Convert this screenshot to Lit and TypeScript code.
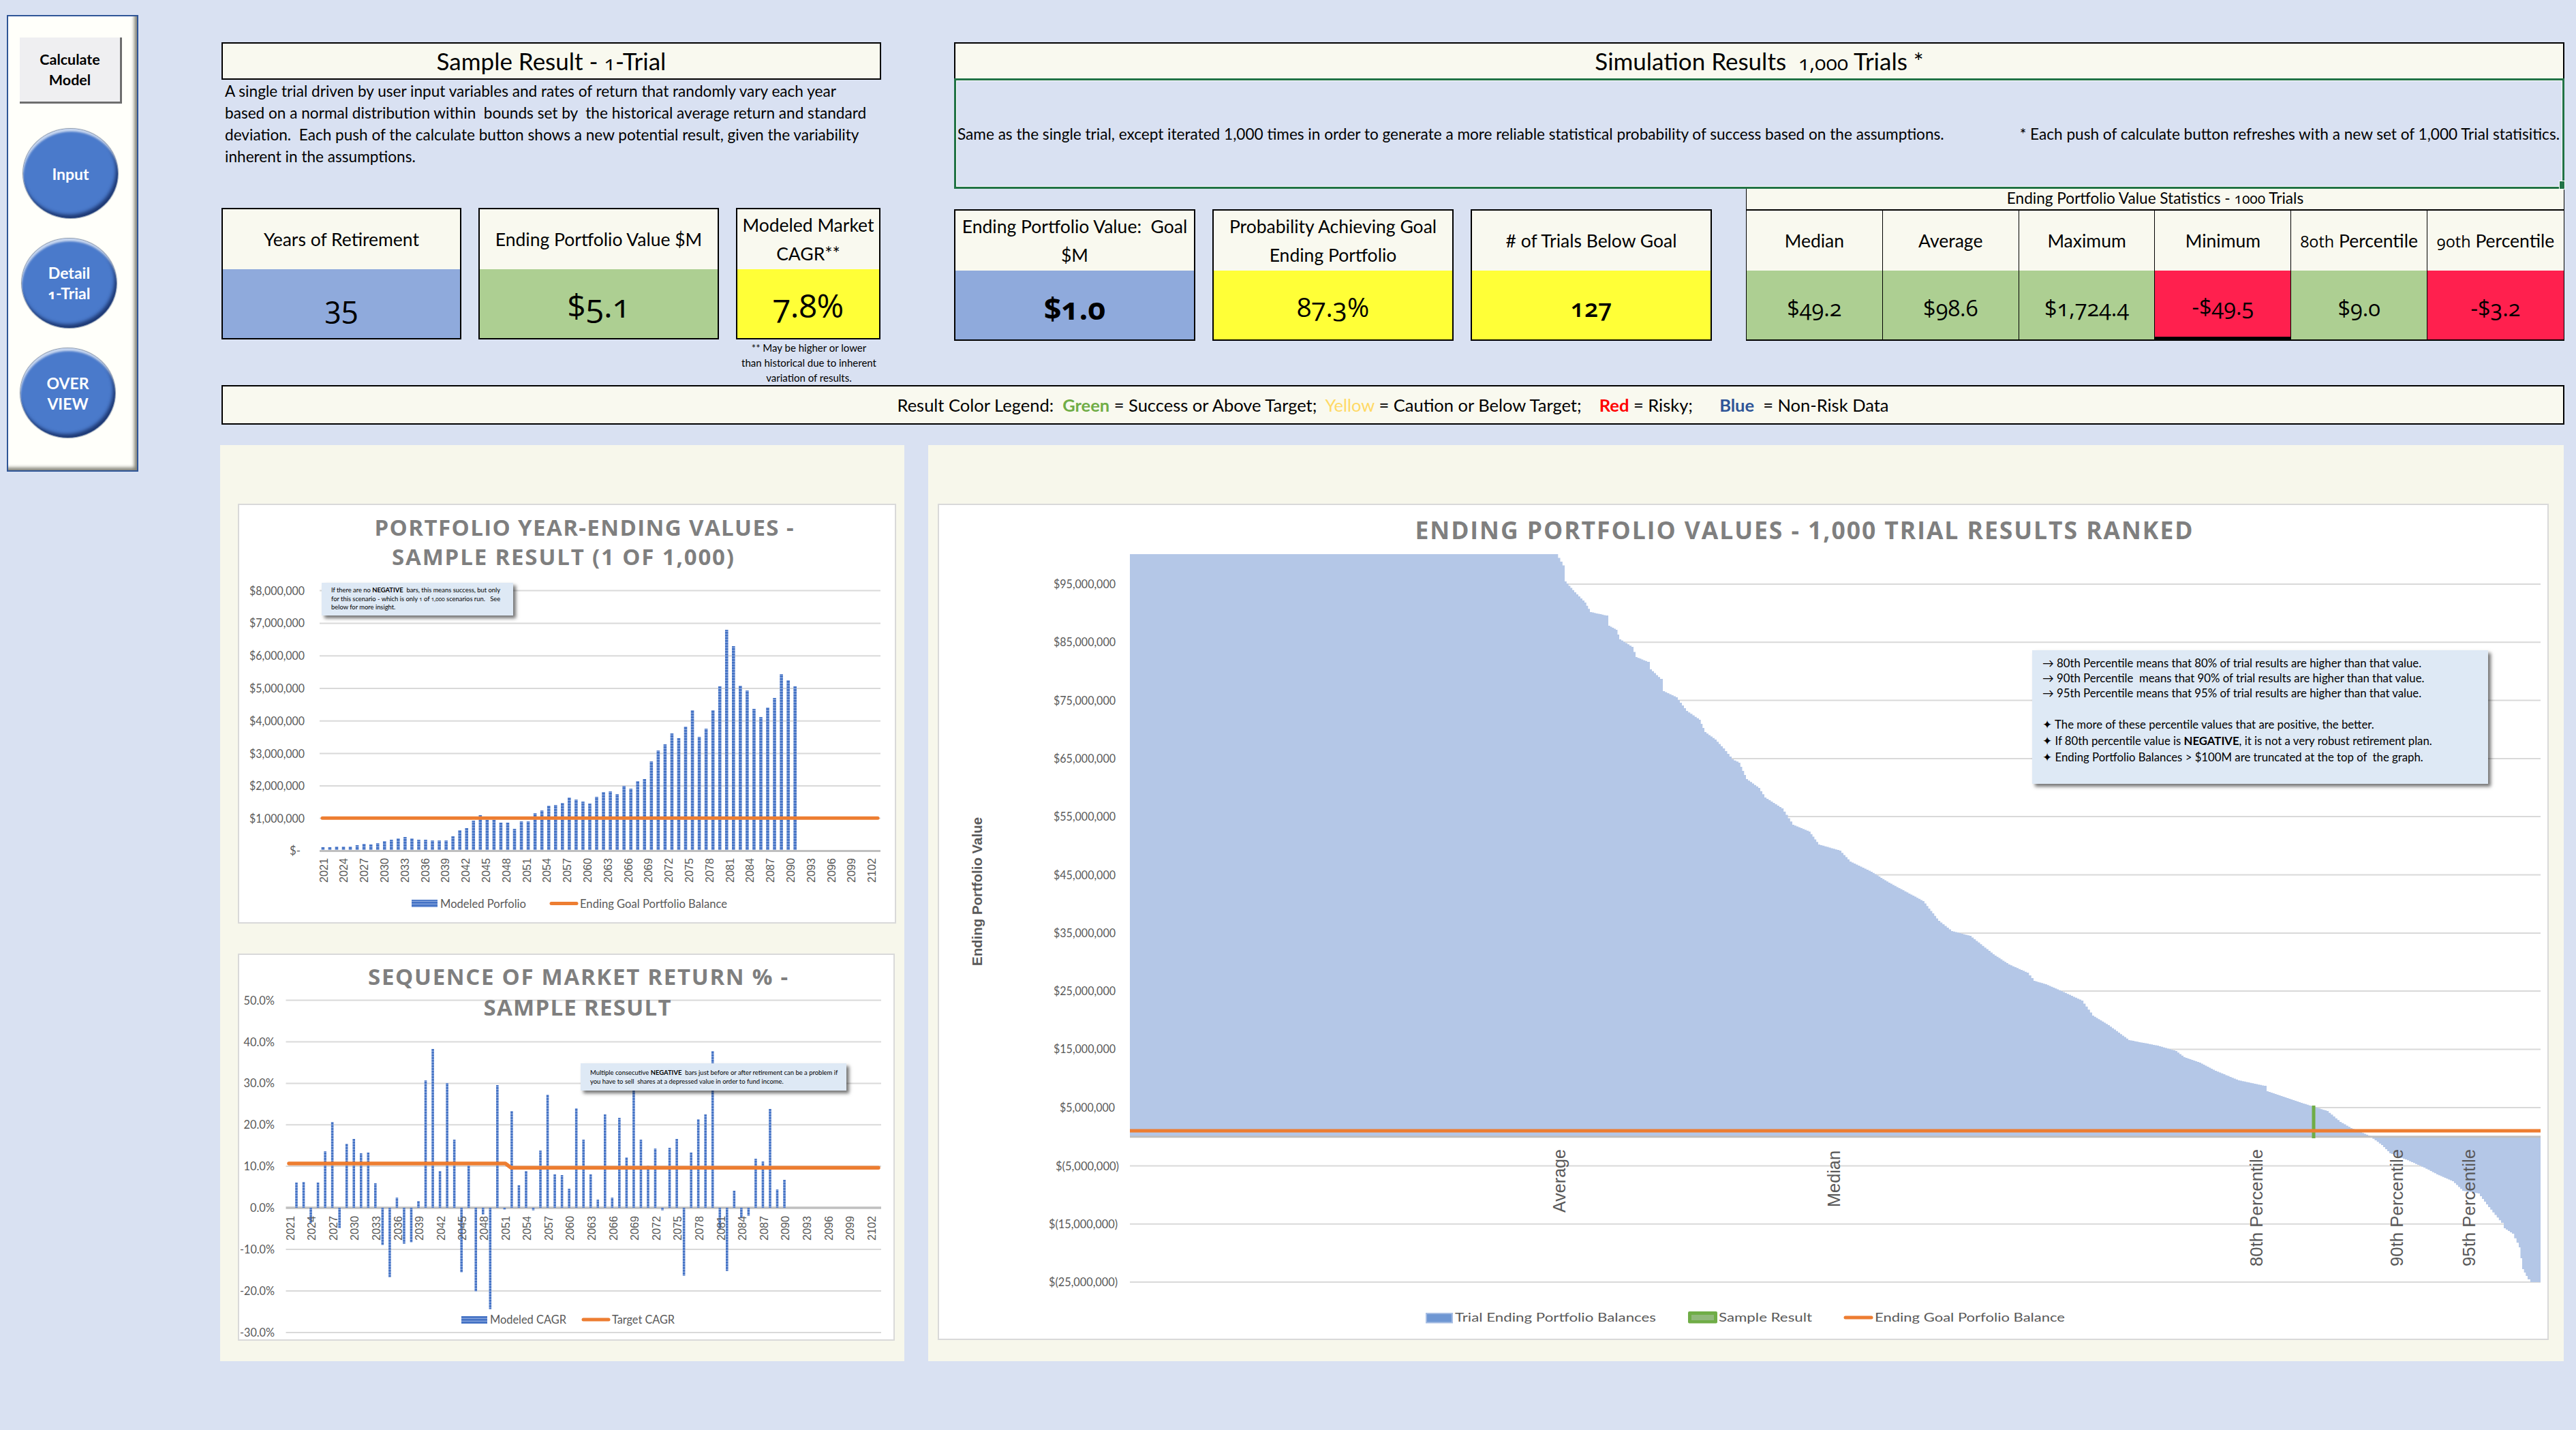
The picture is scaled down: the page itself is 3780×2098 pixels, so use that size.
import { LitElement, html, svg, css, nothing } from "lit";
import { customElement } from "lit/decorators.js";

type TO = { a?: string; len?: number; c?: string; rot?: boolean; sp?: boolean };
const T = (x: number, y: number, s: string, o: TO = {}) => svg`<text x=${x} y=${y} class=${o.c ?? "lab"} text-anchor=${o.a ?? "start"}
  textLength=${o.len ?? nothing} lengthAdjust=${o.len ? (o.sp ? "spacing" : "spacingAndGlyphs") : nothing}
  transform=${o.rot ? `rotate(-90 ${x} ${y})` : nothing}>${s}</text>`;

const pattern = (id: string) => svg`<defs><pattern id=${id} patternUnits="userSpaceOnUse" width="4" height="4">
  <rect width="4" height="4" fill="#8aa8df"></rect><rect width="4" height="2.7" fill="#4472c4"></rect></pattern></defs>`;

const xLabels = (x0: number, step: number, y: number) => {
  const out = [];
  for (let i = 0; i < 28; i++) out.push(T(x0 + i * step, y, String(2021 + 3 * i), { a: "end", rot: true, c: "xl", len: 36 }));
  return out;
};

const C1_TOPS = [1212,1212,1209,1209,1209,1203,1197,1200,1194,1185,1179,1173,1167,1173,1179,1179,1182,1182,1182,1164,1137,1128,1095,1071,1092,1092,1104,1104,1131,1098,1098,1062,1050,1029,1026,1017,993,1002,1011,1020,990,969,966,978,942,954,921,912,834,786,759,711,732,681,609,726,690,609,504,255,327,501,522,603,639,597,555,450,477,504];
const C2_ENDS = [768,765,945,768,630,501,968,597,576,639,636,771,1043,1184,834,1037,1031,849,318,180,717,330,579,1163,693,1247,908,1325,339,887,453,780,717,890,627,381,732,735,795,441,579,732,843,468,834,483,657,357,579,693,618,890,615,576,1178,636,489,468,189,975,1157,804,922,914,663,675,444,798,756];

const CURVE: [number, number][] = [[2283,814],[2296,836],[2296,854],[2310,870],[2325,885],[2333,899],[2356,904],[2360,919],[2371,925],[2376,939],[2394,950],[2400,965],[2417,972],[2421,983],[2436,997],[2440,1015],[2459,1024],[2474,1044],[2493,1057],[2501,1075],[2516,1086],[2528,1099],[2541,1115],[2551,1120],[2562,1144],[2580,1157],[2589,1171],[2614,1187],[2630,1211],[2654,1221],[2668,1240],[2699,1249],[2714,1265],[2745,1280],[2771,1296],[2821,1323],[2844,1352],[2863,1367],[2890,1374],[2924,1401],[2947,1416],[2974,1428],[2984,1440],[3001,1445],[3024,1455],[3054,1469],[3070,1491],[3093,1505],[3123,1527],[3165,1535],[3192,1543],[3204,1552],[3227,1560],[3250,1572],[3284,1586],[3322,1594],[3326,1602],[3376,1619],[3414,1631],[3433,1647],[3449,1656],[3475,1667],[3494,1681],[3506,1693],[3529,1702],[3556,1714],[3575,1724],[3598,1734],[3613,1748],[3636,1752],[3651,1772],[3670,1795],[3674,1803],[3686,1811],[3696,1831],[3701,1863],[3709,1878],[3713,1882],[3728,1882]];

const areaPath = () => {
  const zero = 1668.7;
  let d = `M1658 ${zero} L1658 814 L2283 814`;
  for (let i = 1; i < CURVE.length; i++) {
    const [x0, y0] = CURVE[i - 1];
    const [x1, y1] = CURVE[i];
    const n = Math.max(1, Math.round((x1 - x0) / 3));
    for (let k = 1; k <= n; k++) {
      const x = x0 + ((x1 - x0) * k) / n;
      const y = y0 + ((y1 - y0) * k) / n;
      d += ` H${x.toFixed(1)} V${y.toFixed(1)}`;
    }
  }
  return d + ` L3728 ${zero} Z`;
};

@customElement("app-root")
export class AppRoot extends LitElement {
  static styles = css`
    :host { display: block; width: 3780px; height: 2098px; background: #d9e1f2; font-family: Lato, sans-serif; color: #000; overflow: hidden; }
    .page { display: flex; align-items: flex-start; padding: 22px 0 0 10px; box-sizing: border-box; height: 100%; }
    .old { font-family: "Open Sans", sans-serif; font-variant-numeric: oldstyle-nums; }

    .side { width: 193px; height: 670px; flex: none; box-sizing: border-box; border: 2px solid #2f5597; background: #fffffa; margin-right: 120px;
      box-shadow: inset -6px -6px 5px -2px #85857a, inset 3px 3px 3px -1px #fff;
      display: flex; flex-direction: column; padding: 31px 0 0 17px; }
    .calc { width: 150px; height: 97px; box-sizing: border-box; background: #efeff1; border-right: 3px solid #6e6e6e; border-bottom: 3px solid #6e6e6e;
      display: flex; align-items: center; justify-content: center; text-align: center; font-weight: 700; font-size: 21.5px; line-height: 30px; }
    .orb { width: 139px; height: 131px; border-radius: 50%; background: radial-gradient(ellipse at 50% 55%, #4a7acb 0 75%, #3f6cb9 100%); color: #fff; font-weight: 700; font-size: 23px; line-height: 30px;
      display: flex; align-items: center; justify-content: center; text-align: center;
      box-shadow: inset 1px 5px 3px -1px rgba(255,255,255,.7), inset -3px -5px 5px rgba(15,35,85,.75), 0 0 1px 1px rgba(31,56,100,.55); }
    .orb .old { font-size: 20px; }
    .orb.a { margin: 37px 0 0 5px; }
    .orb.b { margin: 30px 0 0 3px; }
    .orb.c { margin: 30px 0 0 1px; }

    .main { width: 3440px; flex: none; display: flex; flex-direction: column; margin-top: 40px; }
    .top { display: grid; grid-template-columns: 968px 2363px; column-gap: 107px; margin-left: 2px; }
    .ttl { box-sizing: border-box; border: 2px solid #000; background: #f9f9ef; display: flex; align-items: center; justify-content: center; white-space: pre; }
    .ttl.l { height: 55px; font-size: 35px; }
    .ttl.r { height: 53px; font-size: 35px; border-bottom: none; }
    .ttl .old { font-size: 30px; }
    .para { font-size: 22.6px; line-height: 32px; padding: 1px 0 0 5px; height: 188px; box-sizing: border-box; white-space: pre; }

    .sel { height: 162px; box-sizing: border-box; border: 3px solid #217346; outline: 1px solid #fff; outline-offset: -4px; display: flex; align-items: center; justify-content: space-between;
      padding: 0 4px 0 2px; font-size: 22.6px; white-space: pre; position: relative; }
    .handle { position: absolute; right: -4px; bottom: -4px; width: 7px; height: 11px; background: #217346; border: 1px solid #fff; }

    .cards { display: flex; height: 193px; }
    .cards.l { gap: 25px; }
    .cards.r { gap: 25px; }
    .card { box-sizing: border-box; border: 2px solid #000; display: flex; flex-direction: column; flex: none; }
    .w352 { width: 352px; } .w353 { width: 353px; } .w212 { width: 212px; } .w354 { width: 354px; }
    .hd { height: 88px; flex: none; background: #f9f9ef; display: flex; align-items: center; justify-content: center; text-align: center; font-size: 26.5px; line-height: 42px; white-space: pre; }
    .val { flex: 1; display: flex; align-items: center; justify-content: center; font-family: "Open Sans", sans-serif; font-variant-numeric: oldstyle-nums; padding-top: 8px; box-sizing: border-box; }
    .blue { background: #8faadc; } .green { background: #adcf92; } .yellow { background: #ffff37; } .red { background: #ff204e; }
    .f45 { font-size: 45px; }
    .f48 { font-size: 48px; font-weight: 500; padding-top: 4px; }
    .f46b { font-size: 45px; font-weight: 700; }
    .f39 { font-size: 39px; font-weight: 500; padding-top: 4px; }
    .f36 { font-size: 36px; font-weight: 600; }
    .foot { width: 212px; margin-left: auto; text-align: center; font-size: 15px; line-height: 22px; padding-top: 1px; height: 67px; box-sizing: border-box; white-space: nowrap; }

    .rrow { display: flex; justify-content: space-between; align-items: flex-end; }
    .stats { width: 1201px; display: flex; flex-direction: column; }
    .sh { height: 30px; box-sizing: border-box; background: #f9f9ef; border-left: 1px solid #000; border-right: 1px solid #000; display: flex; align-items: center; justify-content: center; font-size: 22.6px; white-space: pre; padding-bottom: 2px; }
    .sh .old { font-size: 21px; }
    .sg { display: grid; grid-template-columns: repeat(6, 1fr); height: 193px; box-sizing: border-box; border: 2px solid #000; border-width: 2px 1px 2px 1px; }
    .sc { display: flex; flex-direction: column; border-right: 1px solid #000; min-width: 0; }
    .sc:last-child { border-right: none; }
    .sc .hd { font-size: 26.5px; }
    .sc .hd .old { font-size: 23.5px; }
    .sc .val { font-size: 32.5px; font-weight: 500; }
    .sc.min .val { border-bottom: 4px solid #000; }

    .legend { margin: 0 0 0 2px; height: 58px; width: 3438px; box-sizing: border-box; border: 2px solid #000; background: #f9f9ef; display: flex; align-items: center; justify-content: center; font-size: 25.5px; white-space: pre; }
    .lg-g { color: #70ad47; font-weight: 700; } .lg-y { color: #ffd966; } .lg-r { color: #ff0000; font-weight: 700; } .lg-b { color: #2f5597; font-weight: 700; }

    .panels { display: grid; grid-template-columns: 1004px 2400px; column-gap: 35px; margin-top: 30px; height: 1344px; }
    .panel { background: #f7f7eb; box-sizing: border-box; padding-top: 86px; display: flex; flex-direction: column; }
    .panel.l { padding-left: 26px; gap: 44px; }
    .panel.r { padding-left: 14px; }
    .chart { position: relative; background: #fff; border: 2px solid #d9d9d9; box-sizing: border-box; }
    .chart svg { display: block; }
    .c1 { width: 966px; height: 616px; }
    .c2 { width: 964px; height: 568px; }
    .c3 { width: 2364px; height: 1227px; }

    .note { position: absolute; box-sizing: border-box; background: #dee9f5; box-shadow: 4px 4px 5px rgba(0,0,0,.55); color: #000; white-space: pre; }
    .note b { font-weight: 700; }
    .n1 { left: 121px; top: 114px; width: 281px; height: 48px; padding: 5px 0 0 14px; font-size: 9.4px; line-height: 12.5px; }
    .n1 .old { font-size: 8.2px; }
    .n2 { left: 501px; top: 159px; width: 390px; height: 40px; padding: 8px 0 0 14px; font-size: 9.45px; line-height: 12.5px; }
    .n3 { left: 1604px; top: 213px; width: 669px; height: 196px; padding: 8px 0 0 15px; font-size: 16.75px; line-height: 22px; }
    .n3 .gap { height: 23px; }
    .n3 .lines2 { line-height: 24px; }
    .star { font-family: "DejaVu Sans", sans-serif; font-size: 17px; }

    text { dominant-baseline: central; }
    .lab { font: 16.5px Lato, sans-serif; fill: #595959; }
    .xl { font: 16px "Liberation Sans", sans-serif; fill: #595959; }
    .rl { font: 25px "Liberation Sans", sans-serif; fill: #595959; }
    .yt { font: 700 20px "Liberation Sans", sans-serif; fill: #595959; }
    .tt { font: 700 33px "Open Sans", sans-serif; fill: #7f7f7f; }
    .tt3 { font: 700 35.5px "Open Sans", sans-serif; fill: #7f7f7f; }
  `;

  chart1() {
    const ys = [867.6, 915.4, 963.2, 1011, 1058.8, 1106.5, 1154, 1201.5];
    const labels = ["$8,000,000","$7,000,000","$6,000,000","$5,000,000","$4,000,000","$3,000,000","$2,000,000","$1,000,000"];
    return html`<svg width="962" height="612" viewBox="351 742 962 612">
      ${pattern("p1")}
      ${T(857, 774, "PORTFOLIO YEAR-ENDING VALUES -", { a: "middle", c: "tt", len: 615, sp: true })}
      ${T(826, 817.5, "SAMPLE RESULT (1 OF 1,000)", { a: "middle", c: "tt", len: 502, sp: true })}
      ${ys.map((y, i) => svg`<line x1="469" x2="1292" y1=${y} y2=${y} stroke="#d9d9d9" stroke-width="2"></line>${T(447, y, labels[i], { a: "end", len: 81 })}`)}
      ${T(441, 1249.4, "$-", { a: "end", len: 16 })}
      ${C1_TOPS.map((Y, i) => svg`<rect x=${471.6 + i * 10.04} y=${840 + Y / 3} width="4.6" height=${1249 - (840 + Y / 3)} fill="url(#p1)"></rect>`)}
      <line x1="469" x2="1292" y1="1249.5" y2="1249.5" stroke="#bfbfbf" stroke-width="3"></line>
      <line x1="473" x2="1288" y1="1201.3" y2="1201.3" stroke="#ed7d31" stroke-width="5" stroke-linecap="round"></line>
      ${xLabels(475, 29.8, 1260)}
      <rect x="604" y="1321" width="38" height="11" fill="url(#p1)"></rect>
      ${T(646, 1326.5, "Modeled Porfolio", { len: 126 })}
      <line x1="809" x2="846" y1="1326.5" y2="1326.5" stroke="#ed7d31" stroke-width="5" stroke-linecap="round"></line>
      ${T(851, 1326.5, "Ending Goal Portfolio Balance", { len: 216 })}
    </svg>`;
  }

  chart2() {
    const ys = [1468.6, 1529.5, 1590.4, 1651.2, 1712, 1773, 1834, 1895, 1956];
    const labels = ["50.0%","40.0%","30.0%","20.0%","10.0%","0.0%","-10.0%","-20.0%","-30.0%"];
    return html`<svg width="960" height="564" viewBox="351 1402 960 564">
      ${pattern("p2")}
      ${ys.map((y, i) => svg`<line x1="419.5" x2="1293" y1=${y} y2=${y} stroke=${i === 5 ? "#bfbfbf" : "#d9d9d9"} stroke-width=${i === 5 ? 3.5 : 2}></line>${T(403, y, labels[i], { a: "end", len: i === 5 ? 36 : i > 5 ? 51 : 45.5 })}`)}
      ${T(848, 1433, "SEQUENCE OF MARKET RETURN % -", { a: "middle", c: "tt", len: 616, sp: true })}
      ${T(847, 1478, "SAMPLE RESULT", { a: "middle", c: "tt", len: 275, sp: true })}
      ${C2_ENDS.map((Y, i) => {
        const x = 435 + i * 10.53;
        const yy = 1480 + Y / 3;
        const top = Math.min(yy, 1773);
        return svg`<rect x=${x - 1.8} y=${top} width="3.6" height=${Math.abs(yy - 1773)} fill="url(#p2)"></rect>`;
      })}
      <path d="M424 1708 L741.6 1708 L750 1714.3 L1289 1714.3" fill="none" stroke="#ed7d31" stroke-width="5.5" stroke-linecap="round" stroke-linejoin="round"></path>
      ${xLabels(426, 31.6, 1785)}
      <rect x="677" y="1932" width="38" height="11" fill="url(#p2)"></rect>
      ${T(719, 1937, "Modeled CAGR", { len: 112 })}
      <line x1="856" x2="893" y1="1937" y2="1937" stroke="#ed7d31" stroke-width="5" stroke-linecap="round"></line>
      ${T(898, 1937, "Target CAGR", { len: 92 })}
    </svg>`;
  }

  chart3() {
    const grid = [858, 943.2, 1028.5, 1114, 1199, 1284.5, 1370, 1455, 1540.4, 1626, 1711.6, 1796.8, 1882];
    const labels = ["$95,000,000","$85,000,000","$75,000,000","$65,000,000","$55,000,000","$45,000,000","$35,000,000","$25,000,000","$15,000,000","$5,000,000","$(5,000,000)","$(15,000,000)","$(25,000,000)"];
    const right = [1637,1637,1637,1637,1637,1637,1637,1637,1637,1636,1642,1640,1640];
    const lens = [91,91,91,91,91,91,91,91,91,81,93,101,101];
    return html`<svg width="2360" height="1223" viewBox="1378 742 2360 1223">
      ${T(2647, 778, "ENDING PORTFOLIO VALUES - 1,000 TRIAL RESULTS RANKED", { a: "middle", c: "tt3", len: 1141, sp: true })}
      ${grid.map((y, i) => svg`<line x1="1658" x2="3728" y1=${y} y2=${y} stroke="#d9d9d9" stroke-width="2"></line>${T(right[i], y, labels[i], { a: "end", len: lens[i] })}`)}
      <path d=${areaPath()} fill="#b4c7e7"></path>
      <line x1="1658" x2="3728" y1="1668.7" y2="1668.7" stroke="#bfbfbf" stroke-width="3"></line>
      <rect x="3392.5" y="1623" width="5" height="48" fill="#70ad47"></rect>
      <line x1="1658" x2="3728" y1="1660" y2="1660" stroke="#ed7d31" stroke-width="5"></line>
      ${T(1433.5, 1200, "Ending Portfolio Value", { a: "end", c: "yt", rot: true, len: 218 })}
      ${T(2288, 1687, "Average", { a: "end", c: "rl", rot: true, len: 93 })}
      ${T(2691, 1689, "Median", { a: "end", c: "rl", rot: true, len: 83 })}
      ${T(3311, 1687, "80th Percentile", { a: "end", c: "rl", rot: true, len: 172 })}
      ${T(3517, 1687, "90th Percentile", { a: "end", c: "rl", rot: true, len: 172 })}
      ${T(3623, 1687, "95th Percentile", { a: "end", c: "rl", rot: true, len: 172 })}
      <rect x="2093" y="1928" width="38" height="13.5" fill="#6f97d3" stroke="#a6bde3" stroke-width="2"></rect>
      ${T(2135, 1934, "Trial Ending Portfolio Balances", { len: 295 })}
      <rect x="2477" y="1925" width="43" height="17.5" rx="2" fill="#70ad47"></rect>
      <rect x="2482" y="1930" width="33" height="8" fill="#90b97a"></rect>
      ${T(2522, 1934, "Sample Result", { len: 137 })}
      <line x1="2708" x2="2746" y1="1934" y2="1934" stroke="#ed7d31" stroke-width="5" stroke-linecap="round"></line>
      ${T(2751, 1934, "Ending Goal Porfolio Balance", { len: 279 })}
    </svg>`;
  }

  render() {
    const stats: [string, string, string][] = [
      ["Median", "$49.2", "green"], ["Average", "$98.6", "green"], ["Maximum", "$1,724.4", "green"],
      ["Minimum", "-$49.5", "red min"], ["8oth", "$9.0", "green"], ["9oth", "-$3.2", "red"],
    ];
    return html`<div class="page">
      <aside class="side">
        <div class="calc"><div>Calculate<br />Model</div></div>
        <div class="orb a"><div>Input</div></div>
        <div class="orb b"><div>Detail<br /><span class="old">1</span>-Trial</div></div>
        <div class="orb c"><div>OVER<br />VIEW</div></div>
      </aside>
      <main class="main">
        <section class="top">
          <div>
            <div class="ttl l"><div>Sample Result - <span class="old">1</span>-Trial</div></div>
            <div class="para">A single trial driven by user input variables and rates of return that randomly vary each year
based on a normal distribution within  bounds set by  the historical average return and standard
deviation.  Each push of the calculate button shows a new potential result, given the variability
inherent in the assumptions.</div>
            <div class="cards l">
              <div class="card w352"><div class="hd">Years of Retirement</div><div class="val blue f45">35</div></div>
              <div class="card w353"><div class="hd">Ending Portfolio Value $M</div><div class="val green f48">$5.1</div></div>
              <div class="card w212"><div class="hd">Modeled Market
CAGR**</div><div class="val yellow f48">7.8%</div></div>
            </div>
            <div class="foot">** May be higher or lower<br />than historical due to inherent<br />variation of results.</div>
          </div>
          <div>
            <div class="ttl r"><div>Simulation Results  <span class="old">1,000</span> Trials *</div></div>
            <div class="sel"><span>Same as the single trial, except iterated 1,000 times in order to generate a more reliable statistical probability of success based on the assumptions.</span><span>* Each push of calculate button refreshes with a new set of 1,000 Trial statisitics.</span><i class="handle"></i></div>
            <div class="rrow">
              <div class="cards r">
                <div class="card w354"><div class="hd">Ending Portfolio Value:  Goal
$M</div><div class="val blue f46b">$1.0</div></div>
                <div class="card w354"><div class="hd">Probability Achieving Goal
Ending Portfolio</div><div class="val yellow f39">87.3%</div></div>
                <div class="card w354"><div class="hd"># of Trials Below Goal</div><div class="val yellow f36">127</div></div>
              </div>
              <div class="stats">
                <div class="sh"><div>Ending Portfolio Value Statistics - <span class="old">1000</span> Trials</div></div>
                <div class="sg">
                  ${stats.map(([h, v, c]) => {
                    const pct = h === "8oth" || h === "9oth";
                    return html`<div class="sc ${c.includes("min") ? "min" : ""}"><div class="hd"><div>${pct ? html`<span class="old">${h}</span> Percentile` : h}</div></div><div class="val ${c.replace(" min", "")}">${v}</div></div>`;
                  })}
                </div>
              </div>
            </div>
          </div>
        </section>
        <div class="legend"><div>Result Color Legend:  <span class="lg-g">Green</span> = Success or Above Target;  <span class="lg-y">Yellow</span> = Caution or Below Target;    <span class="lg-r">Red</span> = Risky;      <span class="lg-b">Blue</span>  = Non-Risk Data</div></div>
        <section class="panels">
          <div class="panel l">
            <div class="chart c1">${this.chart1()}
              <div class="note n1">If there are no <b>NEGATIVE</b>  bars, this means success, but only
for this scenario - which is only <span class="old">1</span> of <span class="old">1,000</span> scenarios run.   See
below for more insight.</div>
            </div>
            <div class="chart c2">${this.chart2()}
              <div class="note n2">Multiple consecutive <b>NEGATIVE</b>  bars just before or after retirement can be a problem if
you have to sell  shares at a depressed value in order to fund income.</div>
            </div>
          </div>
          <div class="panel r">
            <div class="chart c3">${this.chart3()}
              <div class="note n3"><div>→ 80th Percentile means that 80% of trial results are higher than that value.
→ 90th Percentile  means that 90% of trial results are higher than that value.
→ 95th Percentile means that 95% of trial results are higher than that value.</div><div class="gap"></div><div class="lines2"><span class="star">✦</span> The more of these percentile values that are positive, the better.
<span class="star">✦</span> If 80th percentile value is <b>NEGATIVE</b>, it is not a very robust retirement plan.
<span class="star">✦</span> Ending Portfolio Balances > $100M are truncated at the top of  the graph.</div></div>
            </div>
          </div>
        </section>
      </main>
    </div>`;
  }
}
